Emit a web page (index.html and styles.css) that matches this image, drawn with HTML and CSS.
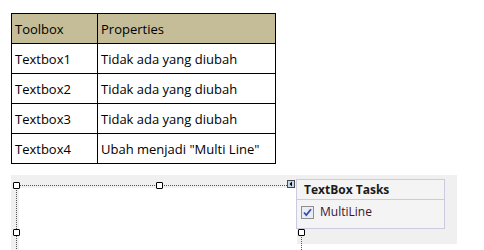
FILE: index.html
```html
<!DOCTYPE html>
<html>
<head>
<meta charset="utf-8">
<link rel="stylesheet" href="styles.css">
</head>
<body>
<table class="props">
  <tr class="head"><td class="c1">Toolbox</td><td class="c2">Properties</td></tr>
  <tr><td class="c1">Textbox1</td><td class="c2">Tidak ada yang diubah</td></tr>
  <tr><td class="c1">Textbox2</td><td class="c2">Tidak ada yang diubah</td></tr>
  <tr><td class="c1">Textbox3</td><td class="c2">Tidak ada yang diubah</td></tr>
  <tr><td class="c1">Textbox4</td><td class="c2">Ubah menjadi "Multi Line"</td></tr>
</table>

<div class="designer">
  <div class="surface">
    <div class="form-area"></div>
  </div>
  <div class="side"></div>

  <div class="sel-top"></div>
  <div class="sel-left"></div>
  <div class="sel-right"></div>
  <span class="handle h-tl"></span>
  <span class="handle h-tm"></span>
  <span class="handle h-tr"></span>
  <span class="handle h-bl"></span>
  <span class="handle h-br"></span>

  <span class="smart-tag"><svg width="6" height="6" viewBox="0 0 6 6"><path d="M4 0.5 L1.5 3 L4 5.5 Z" fill="#000"/></svg></span>

  <div class="tasks">
    <div class="tasks-title">TextBox Tasks</div>
    <label class="tasks-row">
      <span class="check"><svg width="11" height="11" viewBox="0 0 11 11"><path d="M2 5.5 L4.3 8 L9 2.2" fill="none" stroke="#3a4fa8" stroke-width="1.8"/></svg></span>
      <span class="tasks-label">MultiLine</span>
    </label>
  </div>
</div>
</body>
</html>
```

FILE: styles.css
```css
html, body {
  margin: 0;
  padding: 0;
  background: #ffffff;
}

body {
  width: 484px;
  height: 250px;
  overflow: hidden;
}

.props {
  border-collapse: collapse;
  margin: 13px 0 0 11px;
  font-family: "Open Sans", "Noto Sans", sans-serif;
  font-size: 13px;
  color: #000;
}

.props td {
  border: 1px solid #000;
  height: 30px;
  padding: 1px 0 0 3px;
  box-sizing: border-box;
  vertical-align: middle;
  white-space: nowrap;
}

.props .c1 { width: 86px; }
.props .c2 { width: 178px; }

.props .head td {
  background: #c4bd97;
}

.designer {
  position: relative;
  margin: 11px 0 0 11px;
  height: 76px;
  display: flex;
}

.surface {
  width: 286px;
  height: 76px;
  background: #f0f0f0;
  display: flex;
  flex-direction: column;
  align-items: flex-end;
  justify-content: flex-end;
}

.form-area {
  width: 278px;
  height: 63px;
  background: #ffffff;
}

.side {
  width: 160px;
  height: 69px;
  background: #f0f0f0;
}

.sel-top {
  position: absolute;
  left: 5px;
  top: 10px;
  width: 285px;
  border-top: 1px dotted #555;
}

.sel-left {
  position: absolute;
  left: 5px;
  top: 10px;
  height: 70px;
  border-left: 1px dotted #555;
}

.sel-right {
  position: absolute;
  left: 290px;
  top: 55px;
  height: 30px;
  border-left: 1px dotted #555;
}

.handle {
  position: absolute;
  width: 5px;
  height: 5px;
  background: #fff;
  border: 1px solid #000;
  border-radius: 1px;
}

.h-tl { left: 2px; top: 7px; }
.h-tm { left: 145px; top: 7px; }
.h-tr { left: 287px; top: 7px; }
.h-bl { left: 2px; top: 54px; }
.h-br { left: 287px; top: 54px; }

.smart-tag {
  position: absolute;
  left: 276px;
  top: 5px;
  width: 6px;
  height: 6px;
  border: 1px solid #4a4a4a;
  background: #c6d8ee;
  display: flex;
  align-items: center;
  justify-content: center;
}

.smart-tag svg {
  display: block;
}

.tasks {
  position: absolute;
  left: 285px;
  top: 4px;
  width: 147px;
  height: 48px;
  border: 1px solid #cccae0;
  background: #f4f4f4;
  font-family: "Open Sans", "Noto Sans", sans-serif;
  font-size: 12px;
}

.tasks-title {
  height: 20px;
  padding: 2px 0 0 7px;
  box-sizing: border-box;
  font-weight: bold;
  color: #1a1a1a;
  border-bottom: 1px solid #cccae0;
  line-height: 16px;
}

.tasks-row {
  display: flex;
  align-items: center;
  gap: 6px;
  padding: 5px 0 0 4px;
}

.check {
  width: 11px;
  height: 11px;
  border: 1px solid #8e8f8f;
  background: #e8ecf4;
  display: flex;
  align-items: center;
  justify-content: center;
}

.tasks-label {
  color: #3c1432;
  line-height: 14px;
}
```
